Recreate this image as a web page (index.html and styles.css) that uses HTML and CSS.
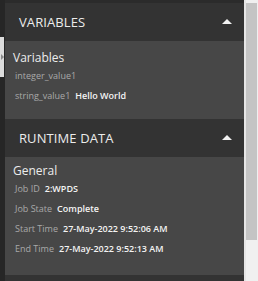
FILE: index.html
```html
<!DOCTYPE html>
<html>
<head>
<meta charset="utf-8">
<link rel="stylesheet" href="styles.css">
</head>
<body>
<div class="app">
  <div class="rail">
    <div class="rail-tab"><span class="rail-arrow"></span></div>
  </div>
  <div class="panel">
    <div class="section-head">
      <span class="head-title">VARIABLES</span>
      <span class="caret"></span>
    </div>
    <div class="section-body body-vars">
      <div class="group-title">Variables</div>
      <div class="row"><span class="label">integer_value1</span></div>
      <div class="row"><span class="label">string_value1</span><span class="value">Hello World</span></div>
    </div>
    <div class="section-head">
      <span class="head-title">RUNTIME DATA</span>
      <span class="caret"></span>
    </div>
    <div class="section-body body-runtime">
      <div class="group-title">General</div>
      <div class="row"><span class="label">Job ID</span><span class="value">2:WPDS</span></div>
      <div class="row"><span class="label">Job State</span><span class="value">Complete</span></div>
      <div class="row"><span class="label">Start Time</span><span class="value">27-May-2022 9:52:06 AM</span></div>
      <div class="row"><span class="label">End Time</span><span class="value">27-May-2022 9:52:13 AM</span></div>
    </div>
    <div class="panel-foot"></div>
  </div>
  <div class="scroll">
    <div class="scroll-thumb"></div>
  </div>
</div>
</body>
</html>
```

FILE: styles.css
```css
html, body {
  margin: 0;
  padding: 0;
  width: 258px;
  height: 281px;
  overflow: hidden;
  background: #262626;
  font-family: "Open Sans", "Noto Sans", sans-serif;
}
.app {
  display: flex;
  height: 281px;
}
.rail {
  width: 5px;
  background: #262626;
  padding-top: 37px;
  box-sizing: border-box;
}
.rail-tab {
  width: 4px;
  height: 40px;
  background: #dcdcdc;
  display: flex;
  align-items: center;
}
.rail-arrow {
  width: 0;
  height: 0;
  border-top: 3px solid transparent;
  border-bottom: 3px solid transparent;
  border-left: 3px solid #8a8a8a;
  margin-left: 1px;
}
.panel {
  width: 239px;
  background: #2b2b2b;
  padding-top: 3px;
  display: flex;
  flex-direction: column;
}
.section-head {
  height: 38px;
  background: #333333;
  display: flex;
  align-items: center;
  justify-content: space-between;
  padding: 0 12px 0 14px;
}
.head-title {
  color: #ececec;
  font-size: 13px;
  letter-spacing: 0.1px;
}
.caret {
  width: 0;
  height: 0;
  border-left: 5px solid transparent;
  border-right: 5px solid transparent;
  border-bottom: 5px solid #f2f2f2;
  margin-top: -1px;
}
.section-body {
  background: #474747;
  padding-left: 8px;
}
.body-vars {
  height: 78px;
  box-sizing: border-box;
  padding-top: 9px;
}
.body-runtime {
  height: 118px;
  box-sizing: border-box;
  padding-top: 6px;
}
.group-title {
  color: #ececec;
  font-size: 12px;
  line-height: 16px;
}
.row {
  height: 20px;
  line-height: 20px;
  padding-left: 2px;
  font-size: 9px;
  display: flex;
  gap: 5px;
  white-space: nowrap;
}
.label {
  color: #a9a9a9;
}
.value {
  color: #f4f4f4;
  font-weight: 600;
}
.panel-foot {
  flex: 1;
  background: #333333;
}
.scroll {
  width: 14px;
  background: #f0f0f0;
  border-left: 2px solid #e6e6e6;
  box-sizing: border-box;
  padding: 3px 1px 0 0;
}
.scroll-thumb {
  height: 237px;
  background: #c4c4c4;
}
```
